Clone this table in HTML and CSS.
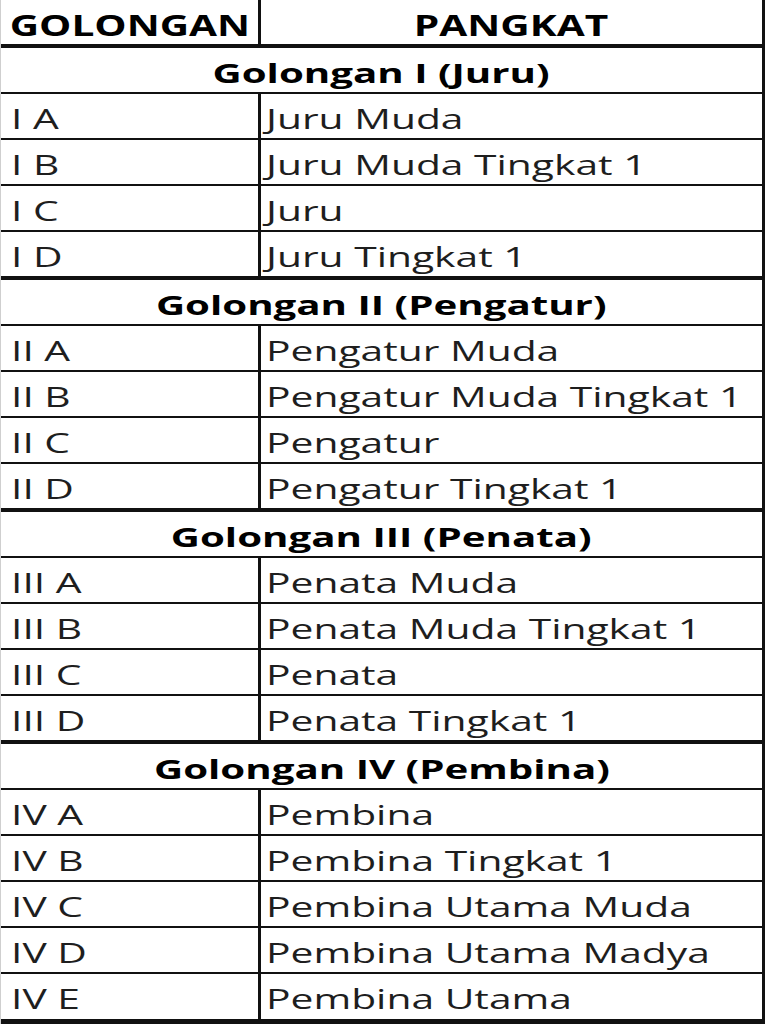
FILE: index.html
```html
<!DOCTYPE html>
<html lang="id">
<head>
<meta charset="utf-8">
<title>Golongan dan Pangkat</title>
<link rel="stylesheet" href="styles.css">
</head>
<body>
<div class="table">
  <div class="row head">
    <div class="cell c1 center"><span class="t tc">GOLONGAN</span></div>
    <div class="cell c2 center"><span class="t tc">PANGKAT</span></div>
  </div>

  <div class="row group"><div class="cell span center"><span class="t tc">Golongan I (Juru)</span></div></div>
  <div class="row"><div class="cell c1"><span class="t">I A</span></div><div class="cell c2"><span class="t">Juru Muda</span></div></div>
  <div class="row"><div class="cell c1"><span class="t">I B</span></div><div class="cell c2"><span class="t">Juru Muda Tingkat 1</span></div></div>
  <div class="row"><div class="cell c1"><span class="t">I C</span></div><div class="cell c2"><span class="t">Juru</span></div></div>
  <div class="row pre"><div class="cell c1"><span class="t">I D</span></div><div class="cell c2"><span class="t">Juru Tingkat 1</span></div></div>

  <div class="row group"><div class="cell span center"><span class="t tc">Golongan II (Pengatur)</span></div></div>
  <div class="row"><div class="cell c1"><span class="t">II A</span></div><div class="cell c2"><span class="t">Pengatur Muda</span></div></div>
  <div class="row"><div class="cell c1"><span class="t">II B</span></div><div class="cell c2"><span class="t">Pengatur Muda Tingkat 1</span></div></div>
  <div class="row"><div class="cell c1"><span class="t">II C</span></div><div class="cell c2"><span class="t">Pengatur</span></div></div>
  <div class="row pre"><div class="cell c1"><span class="t">II D</span></div><div class="cell c2"><span class="t">Pengatur Tingkat 1</span></div></div>

  <div class="row group"><div class="cell span center"><span class="t tc">Golongan III (Penata)</span></div></div>
  <div class="row"><div class="cell c1"><span class="t">III A</span></div><div class="cell c2"><span class="t">Penata Muda</span></div></div>
  <div class="row"><div class="cell c1"><span class="t">III B</span></div><div class="cell c2"><span class="t">Penata Muda Tingkat 1</span></div></div>
  <div class="row"><div class="cell c1"><span class="t">III C</span></div><div class="cell c2"><span class="t">Penata</span></div></div>
  <div class="row pre"><div class="cell c1"><span class="t">III D</span></div><div class="cell c2"><span class="t">Penata Tingkat 1</span></div></div>

  <div class="row group"><div class="cell span center"><span class="t tc">Golongan IV (Pembina)</span></div></div>
  <div class="row"><div class="cell c1"><span class="t">IV A</span></div><div class="cell c2"><span class="t">Pembina</span></div></div>
  <div class="row"><div class="cell c1"><span class="t">IV B</span></div><div class="cell c2"><span class="t">Pembina Tingkat 1</span></div></div>
  <div class="row"><div class="cell c1"><span class="t">IV C</span></div><div class="cell c2"><span class="t">Pembina Utama Muda</span></div></div>
  <div class="row"><div class="cell c1"><span class="t">IV D</span></div><div class="cell c2"><span class="t">Pembina Utama Madya</span></div></div>
  <div class="row last"><div class="cell c1"><span class="t">IV E</span></div><div class="cell c2"><span class="t">Pembina Utama</span></div></div>
</div>
</body>
</html>
```

FILE: styles.css
```css
html, body {
  margin: 0;
  padding: 0;
  background: #ffffff;
}

.table {
  width: 765px;
  box-sizing: border-box;
  border-left: 1px solid #cfcfcf;
  border-right: 3px solid #111111;
  font-family: "Open Sans", "Liberation Sans", sans-serif;
  font-size: 27px;
  color: #1e1e1e;
}

.row {
  display: grid;
  grid-template-columns: 260px 1fr;
  height: 46px;
  box-sizing: border-box;
  border-bottom: 2px solid #111111;
}

.row.head {
  height: 48px;
  border-bottom-width: 4px;
}

.row.pre {
  height: 48px;
  border-bottom-width: 4px;
}

.row.last {
  height: 50px;
  border-bottom-width: 5px;
}

.row.group {
  grid-template-columns: 1fr;
}

.cell {
  display: flex;
  align-items: center;
  padding-top: 4px;
  box-sizing: border-box;
  overflow: visible;
  white-space: nowrap;
}

.c1 {
  border-right: 3px solid #111111;
  padding-left: 10px;
}

.c2 {
  padding-left: 5px;
}

.center {
  justify-content: center;
  padding-left: 0;
}

.head .cell,
.group .cell {
  font-weight: 700;
  color: #000000;
}

.head .cell {
  font-size: 28px;
  padding-top: 6px;
}

.t {
  display: inline-block;
  transform: scaleX(1.51);
  transform-origin: left center;
  line-height: 1;
}

.group .t {
  transform: scaleX(1.49);
}

.head .t {
  transform: scaleX(1.45);
}

.t.tc {
  transform-origin: center center;
}
```
